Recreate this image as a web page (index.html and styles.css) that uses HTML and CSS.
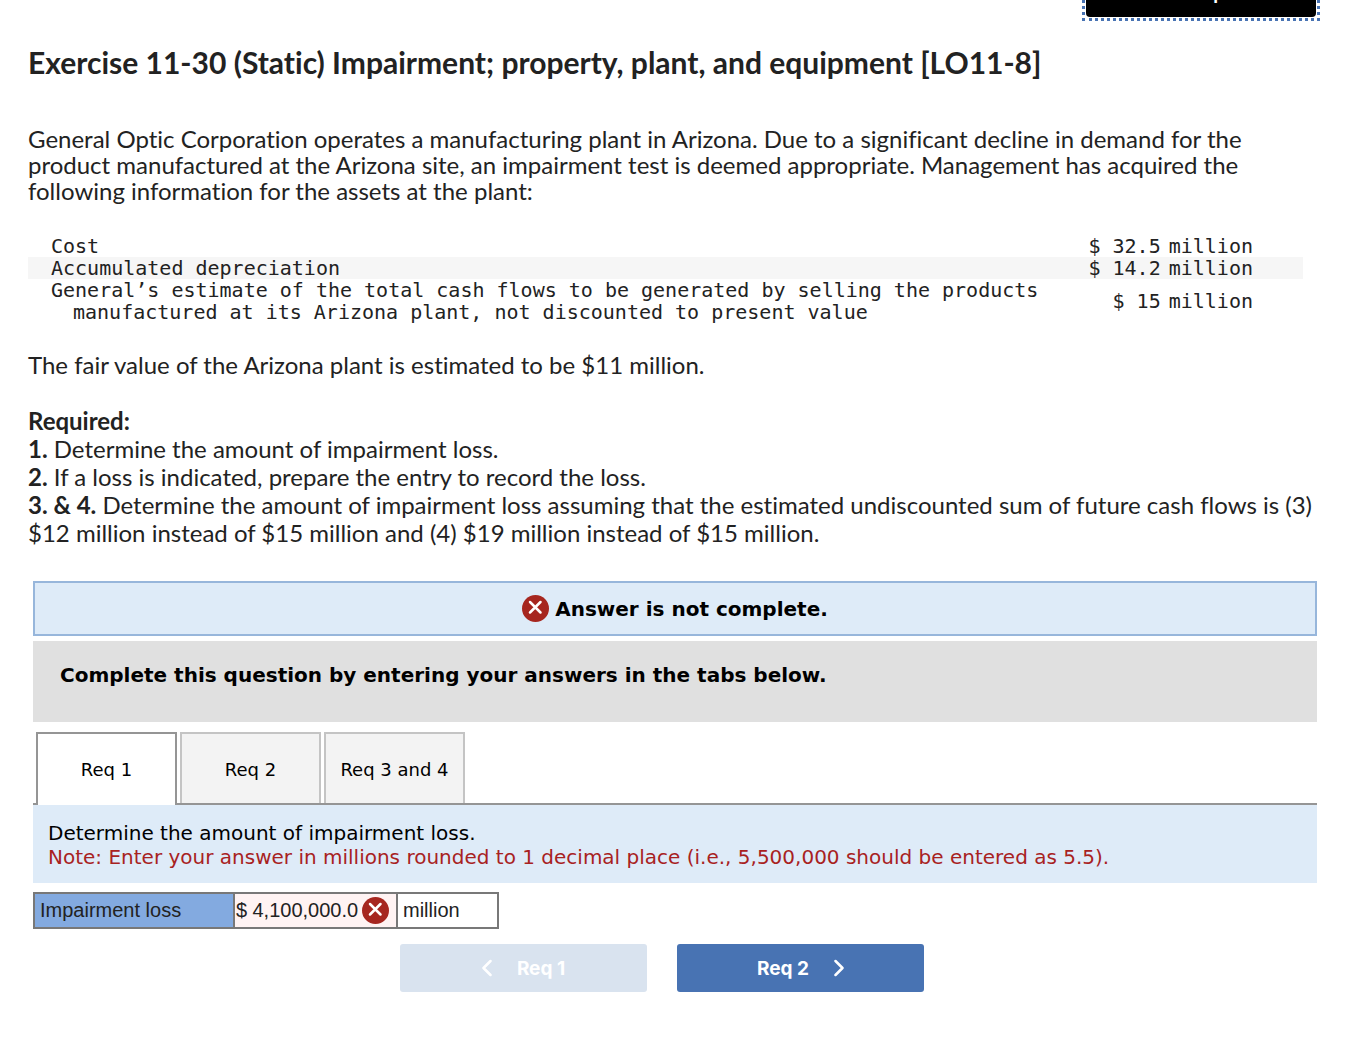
FILE: index.html
```html
<!DOCTYPE html>
<html lang="en">
<head>
    <meta charset="utf-8">
    <title>Exercise 11-30</title>
    <link rel="stylesheet" href="styles.css">
</head>
<body>
<div class="toolbar">
    <div class="focus-ring">
        <button type="button" class="return">Return to question</button>
    </div>
</div>
<main class="page">
    <h1>Exercise 11-30 (Static) Impairment; property, plant, and equipment [LO11-8]</h1>
    <p class="intro">General Optic Corporation operates a manufacturing plant in Arizona. Due to a significant decline in demand for the<br>
        product manufactured at the Arizona site, an impairment test is deemed appropriate. Management has acquired the<br>
        following information for the assets at the plant:</p>

    <table class="assets">
        <tr>
            <td>Cost</td>
            <td class="amount">$ 32.5</td>
            <td class="unit">million</td>
        </tr>
        <tr class="shaded">
            <td>Accumulated depreciation</td>
            <td class="amount">$ 14.2</td>
            <td class="unit">million</td>
        </tr>
        <tr>
            <td><div class="hanging">General’s estimate of the total cash flows to be generated by selling the products<br>manufactured at its Arizona plant, not discounted to present value</div></td>
            <td class="amount">$ 15</td>
            <td class="unit">million</td>
        </tr>
    </table>

    <p class="fair">The fair value of the Arizona plant is estimated to be $11 million.</p>

    <div class="required">
        <p><b>Required:</b></p>
        <p><b>1.</b> Determine the amount of impairment loss.</p>
        <p><b>2.</b> If a loss is indicated, prepare the entry to record the loss.</p>
        <p><b>3. &amp; 4.</b> Determine the amount of impairment loss assuming that the estimated undiscounted sum of future cash flows is (3)<br>
            $12 million instead of $15 million and (4) $19 million instead of $15 million.</p>
    </div>
</main>

<section class="worksheet">
    <div class="status">
        <svg class="wrong" viewBox="0 0 27 27" aria-hidden="true"><circle cx="13.5" cy="13.5" r="13.5"/><path d="M8 7l10.500 10.500M18.500 7L8 17.500"/></svg>
        <span>Answer is not complete.</span>
    </div>
    <div class="directions">Complete this question by entering your answers in the tabs below.</div>

    <div class="tabs" role="tablist">
        <button type="button" role="tab" class="tab active" aria-selected="true">Req 1</button>
        <button type="button" role="tab" class="tab" aria-selected="false">Req 2</button>
        <button type="button" role="tab" class="tab" aria-selected="false">Req 3 and 4</button>
    </div>
    <div class="prompt">
        <p>Determine the amount of impairment loss.</p>
        <p class="note">Note: Enter your answer in millions rounded to 1 decimal place (i.e., 5,500,000 should be entered as 5.5).</p>
    </div>

    <table class="answer">
        <tr>
            <th scope="row"><label for="loss">Impairment loss</label></th>
            <td class="entry">
                <div class="entry-row">
                    <span>$</span>
                    <input id="loss" type="text" value="4,100,000.0">
                    <svg class="wrong" viewBox="0 0 27 27" aria-hidden="true"><circle cx="13.5" cy="13.5" r="13.5"/><path d="M8 7l10.500 10.500M18.500 7L8 17.500"/></svg>
                </div>
            </td>
            <td class="measure">million</td>
        </tr>
    </table>

    <div class="pager">
        <button type="button" class="prev" disabled>
            <svg class="chevron" viewBox="0 0 10 18" aria-hidden="true"><path d="M8.500 2L1.500 9l7 7"/></svg>
            Req 1
        </button>
        <button type="button" class="next">
            Req 2
            <svg class="chevron" viewBox="0 0 10 18" aria-hidden="true"><path d="M1.500 2l7 7-7 7"/></svg>
        </button>
    </div>
</section>
</body>
</html>
```
FILE: styles.css
```css
* {
    box-sizing: border-box;
}

body {
    margin: 0;
    overflow: hidden;
    background: #fff;
    color: #222;
    font-family: Lato, sans-serif;
    font-size: 24px;
    font-variant-ligatures: none;
}

h1,
p {
    margin: 0;
}

button {
    border: 0;
    font: inherit;
}

/* the toolbar is scrolled partly out of view */
.toolbar {
    display: flex;
    justify-content: flex-end;
    height: 17px;
    padding-right: 46px;
}

.focus-ring {
    flex-shrink: 0;
    height: 48px;
    margin-top: -31px;
    outline: 3px dotted #4873b3;
    outline-offset: 1px;
}

.return {
    display: block;
    width: 230px;
    height: 48px;
    padding: 0 0 4px;
    border-radius: 4px;
    background: #000;
    color: #fff;
    font-size: 20px;
    font-weight: 700;
}

.page {
    padding: 27px 28px 0;
}

h1 {
    font-size: 30px;
    font-weight: 700;
    line-height: 36px;
}

.intro {
    margin-top: 46px;
    line-height: 26px;
    white-space: nowrap;
}

.assets {
    width: calc(100% - 31px);
    margin-top: 31px;
    border-collapse: collapse;
    font-family: "DejaVu Sans Mono", monospace;
    font-size: 20px;
    line-height: 22px;
}

.assets td {
    padding: 0 0 0 23px;
    white-space: nowrap;
}

.assets .amount {
    padding: 0;
    text-align: right;
}

.assets .unit {
    width: 142px;
    padding: 0 50px 0 8px;
}

.shaded {
    background: #f6f6f6;
}

.hanging {
    padding-left: 22px;
    text-indent: -22px;
}

.fair {
    margin-top: 29px;
    line-height: 26px;
}

.required {
    margin-top: 29px;
    line-height: 28px;
    white-space: nowrap;
}

.worksheet {
    margin: 34px 45px 0 33px;
    color: #000;
    font-family: "DejaVu Sans", sans-serif;
    font-size: 20px;
}

.status {
    display: flex;
    align-items: center;
    justify-content: center;
    gap: 6px;
    height: 55px;
    border: 2px solid #97b6db;
    background: #deebf8;
    font-weight: 700;
}

.wrong {
    flex: none;
    width: 27px;
    height: 27px;
    fill: #a6261f;
}

.wrong path,
.chevron path {
    fill: none;
    stroke: #fff;
    stroke-width: 2.5;
    stroke-linecap: round;
    stroke-linejoin: round;
}

.directions {
    margin-top: 5px;
    padding: 22px 27px 35px;
    background: #e0e0e0;
    font-weight: 700;
    line-height: 24px;
}

.tabs {
    display: flex;
    gap: 3px;
    margin-top: 10px;
    padding-left: 3px;
    border-bottom: 2px solid #959595;
}

.tab {
    width: 141px;
    height: 71px;
    padding: 2px 0 0;
    border: 2px solid #c4c4c4;
    border-bottom: 0;
    background: #f3f3f3;
    color: #000;
    font-size: 18px;
}

.tab.active {
    height: 73px;
    margin-bottom: -2px;
    padding-bottom: 2px;
    border-color: #959595;
    background: #fff;
}

.prompt {
    padding: 16px 15px 14px;
    background: #deebf8;
    line-height: 24px;
}

.note {
    color: #a8221f;
}

.answer {
    margin-top: 9px;
    border-collapse: collapse;
    color: #222;
    font-family: "Liberation Sans", Arial, sans-serif;
    font-size: 20px;
}

.answer th,
.answer td {
    height: 35px;
    padding: 0 5px;
    border: 2px solid #787878;
    font-weight: 400;
    text-align: left;
}

.answer th {
    width: 200px;
    background: #83aae0;
}

.answer .entry {
    width: 163px;
    padding: 0 0 0 1px;
    background: #fff3f3;
}

.entry-row {
    display: flex;
    align-items: center;
    gap: 4px;
}

.entry input {
    width: 107px;
    padding: 0;
    border: 0;
    outline: 0;
    background: none;
    color: inherit;
    font: inherit;
    text-align: right;
}

.answer .measure {
    width: 101px;
}

.pager {
    display: flex;
    justify-content: center;
    gap: 30px;
    margin: 15px 26px 0 0;
}

.pager button {
    display: flex;
    align-items: center;
    justify-content: center;
    gap: 25px;
    width: 247px;
    height: 48px;
    border-radius: 3px;
    background: #4873b3;
    color: #fff;
    font-family: Inter, sans-serif;
    font-size: 19px;
    font-weight: 700;
}

.pager .prev {
    background: #d9e3ef;
}

.chevron {
    width: 10px;
    height: 18px;
}
```
